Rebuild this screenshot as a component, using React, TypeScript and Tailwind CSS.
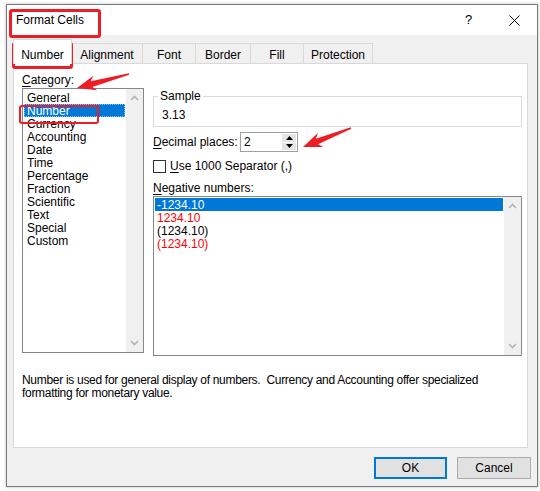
import React from "react";

const categories = [
  "General",
  "Number",
  "Currency",
  "Accounting",
  "Date",
  "Time",
  "Percentage",
  "Fraction",
  "Scientific",
  "Text",
  "Special",
  "Custom",
];

const negatives = [
  { label: "-1234.10", red: false },
  { label: "1234.10", red: true },
  { label: "(1234.10)", red: false },
  { label: "(1234.10)", red: true },
];

const tabs = [
  { name: "Alignment", w: "w-[71px]" },
  { name: "Font", w: "w-[53px]" },
  { name: "Border", w: "w-[55px]" },
  { name: "Fill", w: "w-[53px]" },
  { name: "Protection", w: "w-[69px]" },
];

// tapered callout arrow, tail -> tip
function arrowPoints(tx: number, ty: number, px: number, py: number) {
  const head = 19;
  const headW = 15;
  const neck = 6;
  const dx = px - tx;
  const dy = py - ty;
  const len = Math.hypot(dx, dy);
  const ux = dx / len;
  const uy = dy / len;
  const nx = -uy;
  const ny = ux;
  const bx = px - ux * head;
  const by = py - uy * head;
  const pts = [
    [tx + nx * 0.7, ty + ny * 0.7],
    [bx + ux * 4 + nx * (neck / 2), by + uy * 4 + ny * (neck / 2)],
    [bx + nx * (headW / 2), by + ny * (headW / 2)],
    [px, py],
    [bx - nx * (headW / 2), by - ny * (headW / 2)],
    [bx + ux * 4 - nx * (neck / 2), by + uy * 4 - ny * (neck / 2)],
    [tx - nx * 0.7, ty - ny * 0.7],
  ];
  return pts.map((p) => p.join(",")).join(" ");
}

function Chevron({ up }: { up?: boolean }) {
  return (
    <svg width="9" height="6" viewBox="0 0 9 6">
      <path
        d={up ? "M1 5 L4.5 1.5 L8 5" : "M1 1 L4.5 4.5 L8 1"}
        fill="none"
        stroke="#b4b4b4"
        strokeWidth="1.6"
      />
    </svg>
  );
}

function ScrollTrack() {
  return (
    <div className="flex w-[17px] flex-col items-center justify-between bg-[#f0f0f0] py-[6px]">
      <Chevron up />
      <Chevron />
    </div>
  );
}

export default function App() {
  return (
    <div className="relative h-[491px] w-[540px] bg-white font-['Liberation_Sans',Arial,sans-serif] text-[12px] text-black">
      <div className="ml-[6px] mt-[4px] flex h-[483px] w-[532px] flex-col border border-[#7a7a7a] bg-[#f0f0f0] shadow-[0_0_3px_rgba(0,0,0,0.25)]">
        {/* title bar */}
        <div className="flex h-[30px] items-center bg-white">
          <span className="pl-[9px] text-[12px]">Format Cells</span>
          <div className="ml-auto flex h-full">
            <div className="flex w-[45px] items-center justify-center text-[13px]">?</div>
            <div className="flex w-[46px] items-center justify-center">
              <svg width="11" height="11" viewBox="0 0 11 11">
                <path d="M0.5 0.5 L10.5 10.5 M10.5 0.5 L0.5 10.5" stroke="#000" strokeWidth="1" />
              </svg>
            </div>
          </div>
        </div>

        {/* tabs */}
        <div className="flex h-[28px] items-end pl-[6px]">
          <div className="relative z-10 -mb-px flex h-[25px] w-[59px] items-start justify-center border-x border-t border-[#d9d9d9] bg-white pt-[8px] leading-[14px]">
            Number
          </div>
          {tabs.map((t) => (
            <div
              key={t.name}
              className={`flex h-[20px] ${t.w} items-start justify-center border-r border-t border-[#d9d9d9] bg-[#f0f0f0] pt-[4px] leading-[14px]`}
            >
              {t.name}
            </div>
          ))}
        </div>

        {/* tab page */}
        <div className="ml-[6px] h-[385px] w-[515px] border border-[#d9d9d9] bg-white pl-[8px] pt-[9px]">
          <div className="flex gap-[9px]">
            <div className="w-[122px]">
              <div className="h-[15px] leading-[15px]">
                <u className="underline-offset-2">C</u>ategory:
              </div>
              <div className="flex h-[265px] border border-[#828790] bg-white">
                <div className="flex-1 px-px pt-[2px]">
                  {categories.map((c) => (
                    <div
                      key={c}
                      className={`h-[13px] pl-[3px] pt-[1px] leading-[13px] ${
                        c === "Number"
                          ? "bg-[#0078d7] text-white outline-1 -outline-offset-1 outline-dotted outline-[#8fc3ef]"
                          : ""
                      }`}
                    >
                      {c}
                    </div>
                  ))}
                </div>
                <ScrollTrack />
              </div>
            </div>

            <div className="flex w-[369px] flex-col pt-[16px]">
              <fieldset className="h-[38px] border border-[#dcdcdc]">
                <legend className="ml-[4px] px-[2px] leading-[14px]">Sample</legend>
                <div className="mt-[5px] pl-[8px] leading-[14px]">3.13</div>
              </fieldset>

              <div className="mt-[5px] flex h-[20px] items-center">
                <span className="w-[87px] whitespace-nowrap">
                  <u className="underline-offset-2">D</u>ecimal places:
                </span>
                <div className="flex h-[20px] w-[58px] border border-[#a0a0a0] bg-white">
                  <span className="flex-1 pl-[3px] leading-[18px]">2</span>
                  <div className="flex w-[15px] flex-col gap-px bg-white py-px pr-px">
                    <div className="flex flex-1 items-center justify-center bg-[#e5e5e5]">
                      <svg width="7" height="4" viewBox="0 0 7 4">
                        <path d="M0 4 L3.5 0 L7 4 Z" fill="#000" />
                      </svg>
                    </div>
                    <div className="flex flex-1 items-center justify-center bg-[#e5e5e5]">
                      <svg width="7" height="4" viewBox="0 0 7 4">
                        <path d="M0 0 L3.5 4 L7 0 Z" fill="#000" />
                      </svg>
                    </div>
                  </div>
                </div>
              </div>

              <div className="mt-[8px] flex h-[13px] items-center gap-[4px]">
                <div className="h-[13px] w-[13px] border border-[#333] bg-white" />
                <span className="leading-[13px]">
                  <u className="underline-offset-2">U</u>se 1000 Separator (,)
                </span>
              </div>

              <div className="mt-[8px] h-[15px] leading-[15px]">
                <u className="underline-offset-2">N</u>egative numbers:
              </div>
              <div className="flex h-[160px] border border-[#828790] bg-white">
                <div className="flex-1 p-px">
                  {negatives.map((n, i) => (
                    <div
                      key={i}
                      className={`h-[13px] pl-[2px] pt-[1px] leading-[13px] ${
                        i === 0 ? "bg-[#0078d7] text-white" : n.red ? "text-[#ff0000]" : ""
                      }`}
                    >
                      {n.label}
                    </div>
                  ))}
                </div>
                <ScrollTrack />
              </div>
            </div>
          </div>

          <p className="mt-[18px] whitespace-pre leading-[13px] tracking-[-0.3px]">
            {"Number is used for general display of numbers.  Currency and Accounting offer specialized\nformatting for monetary value."}
          </p>
        </div>

        {/* buttons */}
        <div className="mt-[9px] flex justify-end gap-[10px] pr-[6px]">
          <button className="h-[22px] w-[73px] border-2 border-[#0078d7] bg-[#e1e1e1] leading-[18px]">OK</button>
          <button className="h-[22px] w-[74px] border border-[#adadad] bg-[#e1e1e1] leading-[20px]">Cancel</button>
        </div>
      </div>

      {/* red callouts */}
      <div className="absolute left-[9px] top-[5px] h-[29px] w-[92px] rounded-[3px] border-[3px] border-[#ee1c25]" />
      <div className="absolute left-[12px] top-[38px] h-[27px] w-[61px] rounded-[3px] border-[3px] border-[#ee1c25]" />
      <div className="absolute left-[19px] top-[101px] h-[19px] w-[80px] rounded-[3px] border-[2.5px] border-[#ee1c25]" />
      <svg className="pointer-events-none absolute left-0 top-0" width="540" height="491">
        <polygon points={arrowPoints(129, 70, 77, 84)} fill="#ee1c25" />
        <polygon points={arrowPoints(351, 124, 303, 143)} fill="#ee1c25" />
      </svg>
    </div>
  );
}
